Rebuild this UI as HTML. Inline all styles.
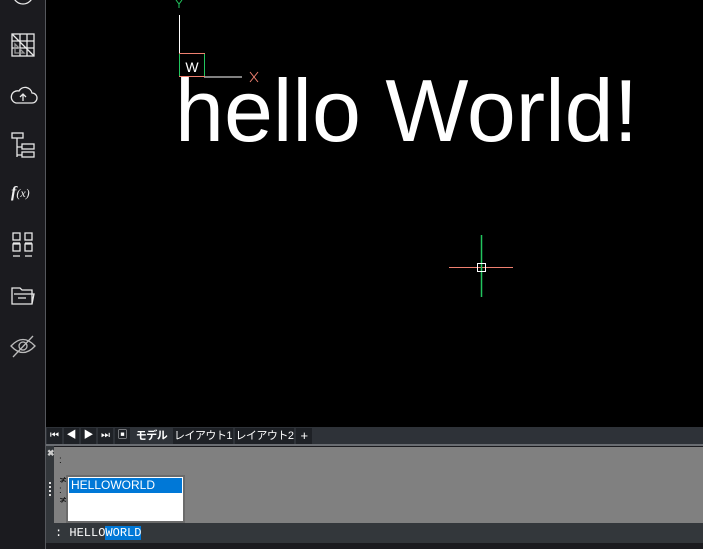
<!DOCTYPE html>
<html><head><meta charset="utf-8"><style>
*{margin:0;padding:0;box-sizing:border-box}
body{width:703px;height:549px;background:#1b1b1f;position:relative;overflow:hidden;font-family:"Liberation Sans","Noto Sans CJK JP",sans-serif}
.abs{position:absolute}
.nb{width:15px;background:#1e2126;text-align:center;line-height:16px;font-size:10px}
.tb{line-height:16px;font-size:11px;text-align:center;white-space:nowrap;overflow:visible;letter-spacing:-0.5px}
</style></head><body>
<div class="abs" style="left:0;top:0;width:45px;height:549px;background:#1b1b1f"></div>
<div class="abs" style="left:45px;top:0;width:1px;height:549px;background:#55575c"></div>
<svg class="abs" style="left:0;top:0" width="45" height="549" fill="none" stroke="#e8e8e8" stroke-width="1.3">
 <circle cx="23" cy="-6" r="10"/><path d="M21 -2 q3 1 4 -4"/>
 <rect x="12" y="34" width="22" height="22"/><path d="M12 34 L34 56 M20 34 V56 M27 34 V56 M12 41 H34 M12 48 H34"/>
 <path d="M15 53 V44 L24 53 Z" stroke="#999"/>
 <path d="M16 103 H32 a5 5 0 0 0 0 -10 a7 7 0 0 0 -13 -2 a6 6 0 0 0 -3 12 Z M23 101 V94 M20 97 L23 94 L26 97"/>
 <rect x="12" y="133" width="11" height="5"/><path d="M17 138 V157 M17 147 H22 M17 155 H22"/><rect x="22" y="144" width="12" height="5"/><rect x="22" y="152" width="12" height="5"/>
 <rect x="13" y="233" width="7" height="7"/><rect x="25" y="233" width="7" height="7"/><rect x="13" y="244" width="7" height="7"/><rect x="25" y="244" width="7" height="7"/>
 <path d="M13 243 H20 M25 243 H32 M13 256 H20 M25 256 H32"/>
 <path d="M12 288 H20 L22 290 H32 V304 H12 Z M14 294 H34 L32 304 M18 298 H26"/>
 <path d="M11 346 Q23 333 35 346 Q23 359 11 346 Z" stroke="#bbb"/><circle cx="23" cy="346" r="4" stroke="#bbb"/><path d="M13 357 L33 336" stroke="#bbb"/>
</svg>
<div class="abs" style="left:11px;top:184px;color:#eee;font-family:'Liberation Serif',serif;font-style:italic;font-size:16px;font-weight:bold">f<span style="font-size:12px;font-weight:normal">(x)</span></div>
<div class="abs" style="left:46px;top:0;width:657px;height:427px;background:#000"></div>
<svg class="abs" style="left:0;top:0" width="703" height="427">
 <path d="M176 0 L179 4 L182 0 M179 4 V8" stroke="#22c55e" fill="none"/>
 <path d="M179.5 15 V77 M204 77 H242" stroke="#fff"/>
 <path d="M179.5 53 V77" stroke="#22c55e"/><path d="M204.5 53 V77" stroke="#22c55e"/>
 <path d="M179 53.5 H205 M179 76.5 H205" stroke="#f08070"/>
 <text x="192" y="72" fill="#fff" font-size="14" text-anchor="middle" font-family="Liberation Sans">W</text>
 <path d="M250 72 L258 82 M258 72 L250 82" stroke="#f08070"/>
 <text x="175" y="141" fill="#fff" font-size="88" font-family="Liberation Sans">hello World!</text>
 <path d="M449 267.5 H513" stroke="#f08070"/>
 <path d="M481.5 235 V297" stroke="#22c55e" stroke-width="1.5"/>
 <rect x="477.5" y="263.5" width="8" height="8" fill="none" stroke="#fff"/>
</svg>
<div class="abs" style="left:46px;top:427px;width:657px;height:17px;background:#2e3238"></div>
<div class="abs" style="left:46px;top:444px;width:657px;height:2px;background:#6a6d72"></div>
<div class="abs" style="left:47px;top:428px;height:16px;display:flex;gap:2px;color:#fff">
 <div class="nb">⏮</div><div class="nb">◀</div><div class="nb">▶</div><div class="nb">⏭</div><div class="nb">▣</div>
 <div class="tb" style="width:39px;background:#2e3238;font-weight:bold">モデル</div>
 <div class="tb" style="width:60px;background:#1e2126">レイアウト1</div>
 <div class="tb" style="width:59px;background:#1e2126">レイアウト2</div>
 <div class="tb" style="width:16px;background:#1e2126;font-size:13px">+</div>
</div>
<div class="abs" style="left:46px;top:446px;width:8px;height:77px;background:#33373b"></div>
<div class="abs" style="left:47px;top:448px;color:#ccc;font-size:9px;font-weight:bold">✖</div>
<div class="abs" style="left:49px;top:482px;width:2px;height:14px;border-left:2px dotted #ddd"></div>
<div class="abs" style="left:54px;top:447px;width:649px;height:76px;background:#808080"></div>
<div class="abs" style="left:59px;top:456px;font-size:10px;color:#111;line-height:10px">:<br><br>≭ . . .<br>:<br>≭</div>
<div class="abs" style="left:66px;top:475px;width:119px;height:48px;background:#fff;border:2px solid #6b6b6b"></div>
<div class="abs" style="left:69px;top:478px;width:113px;height:15px;background:#0078d7;color:#fff;font-size:12px;line-height:15px;padding-left:2px">HELLOWORLD</div>
<div class="abs" style="left:46px;top:523px;width:657px;height:20px;background:#33373b"></div>
<div class="abs" style="left:55px;top:526px;font-family:'Liberation Mono',monospace;font-size:12px;color:#fff;line-height:14px">: HELLO<span style="background:#0078d7">WORLD</span></div>
</body></html>
